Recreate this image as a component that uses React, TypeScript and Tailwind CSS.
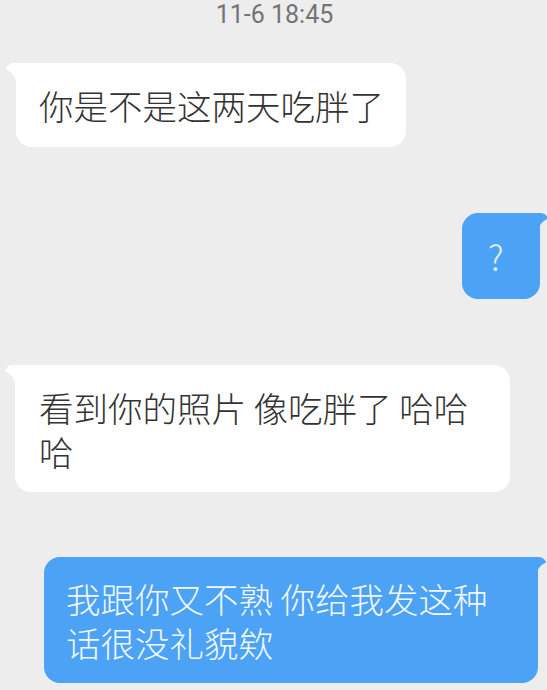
import React from 'react';

const CJK = { fontFamily: '"Noto Sans CJK SC", "Noto Sans", sans-serif' };

const TailLeft: React.FC = () => (
  <svg className="absolute left-[-10px] top-0" width="20" height="24" viewBox="0 0 20 24">
    <path d="M20 0 L7 0 Q1.5 0.5 0 6.5 Q8 9 10 18 L10 24 L20 24 Z" fill="#ffffff" />
  </svg>
);

const TailRight: React.FC = () => (
  <svg className="absolute right-[-8px] top-0" width="20" height="24" viewBox="0 0 20 24">
    <path d="M0 0 L13 0 Q18.5 0.5 20 5.5 Q12 8.5 10 18 L10 24 L0 24 Z" fill="#4ca2f4" />
  </svg>
);

const App: React.FC = () => {
  return (
    <div className="w-[547px] h-[690px] overflow-hidden bg-[#ededed] flex flex-col">
      <div
        className="pl-[2px] text-center text-[25px] leading-[29px] text-[#747474]"
        style={{ fontFamily: 'Roboto, "Liberation Sans", sans-serif' }}
      >
        11-6 18:45
      </div>

      {/* incoming */}
      <div
        className="relative mt-[34px] ml-[16px] w-[390px] rounded-[16px] rounded-tl-none bg-white pl-[23px] py-[20px] text-[34.5px] font-light leading-[44px] text-[#333333]"
        style={CJK}
      >
        <TailLeft />
        <span className="relative">你是不是这两天吃胖了</span>
      </div>

      {/* outgoing */}
      <div
        className="relative mt-[66px] self-end mr-[7px] w-[78px] rounded-[16px] rounded-tr-none bg-[#4ca2f4] pl-[26px] py-[21px] text-[34.5px] font-light leading-[44px] text-[#e3f1ff]"
        style={CJK}
      >
        <TailRight />
        <span className="relative">?</span>
      </div>

      {/* incoming */}
      <div
        className="relative mt-[66px] ml-[15px] w-[495px] rounded-[16px] rounded-tl-none bg-white pl-[24px] pt-[20px] pb-[19px] text-[34.5px] font-light leading-[44px] text-[#333333]"
        style={CJK}
      >
        <TailLeft />
        <span className="relative">
          看到你的照片 像吃胖了 哈哈
          <br />
          哈
        </span>
      </div>

      {/* outgoing */}
      <div
        className="relative mt-[65px] self-end mr-[9px] w-[494px] rounded-[16px] rounded-tr-none bg-[#4ca2f4] pl-[22px] py-[19px] text-[34.5px] font-light leading-[44px] text-[#f2f8ff]"
        style={CJK}
      >
        <TailRight />
        <span className="relative">
          我跟你又不熟 你给我发这种
          <br />
          话很没礼貌欸
        </span>
      </div>
    </div>
  );
};

export default App;
